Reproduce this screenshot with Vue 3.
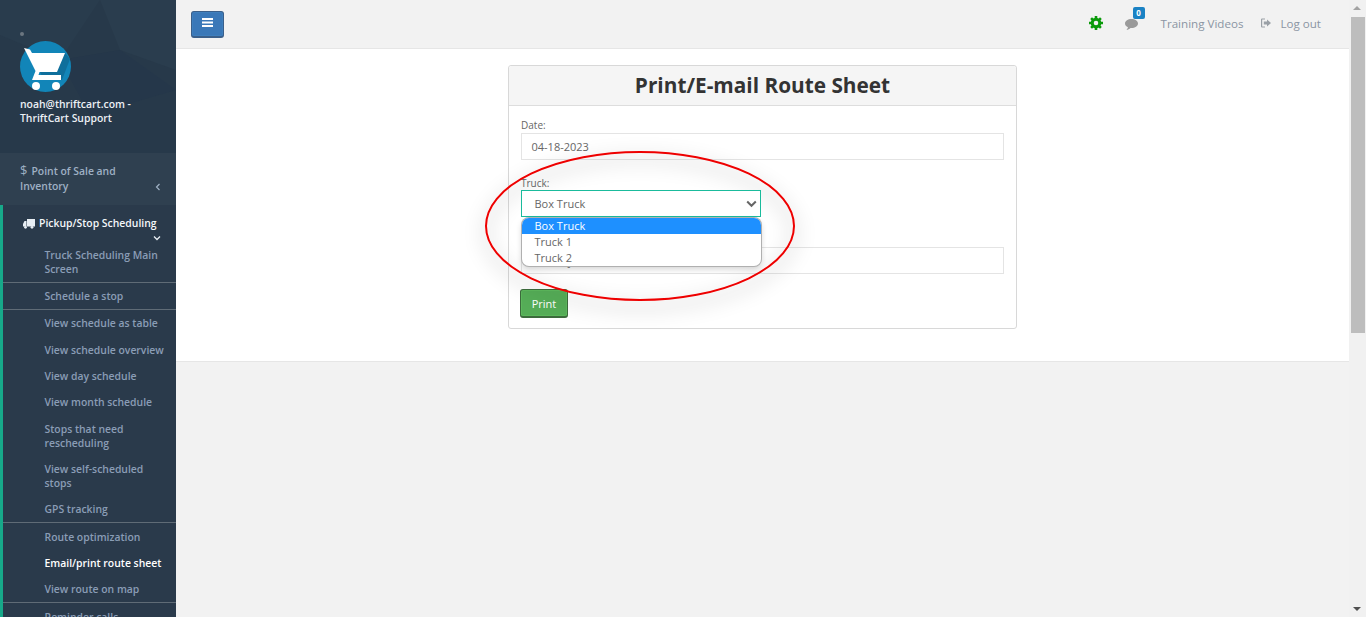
<script setup>
const items = [
  { t: 'Truck Scheduling Main Screen', line: true },
  { t: 'Schedule a stop', line: true },
  { t: 'View schedule as table' },
  { t: 'View schedule overview' },
  { t: 'View day schedule' },
  { t: 'View month schedule' },
  { t: 'Stops that need rescheduling' },
  { t: 'View self-scheduled stops' },
  { t: 'GPS tracking', line: true },
  { t: 'Route optimization' },
  { t: 'Email/print route sheet', active: true },
  { t: 'View route on map', line: true },
  { t: 'Reminder calls' }
]
</script>

<template>
  <div class="page">
    <aside class="side">
      <div class="profile">
        <svg class="poly" width="176" height="153" viewBox="0 0 176 153">
          <polygon points="0,0 100,0 60,60 0,35" fill="#293c4d" />
          <polygon points="100,0 176,0 176,70 120,50" fill="#2a3d4e" />
          <polygon points="60,60 120,50 176,90 90,115" fill="#25374a" />
          <polygon points="0,125 176,125 176,153 0,153" fill="#27394a" />
        </svg>
        <span class="dot"></span>
        <svg class="avatar" width="51" height="51" viewBox="0 0 51 51">
          <circle cx="25.500" cy="25.500" r="25.500" fill="#1285b8" />
          <path d="M45 12 L50 18 L42 39 H24 L20 31 Z" fill="#0f6f9c" />
          <path d="M4 7 L10 8.500 L12 12 H45 L37 31 H19.500 L18.500 34 H41 V39 H12 L15.500 30 Z" fill="#fff" />
          <circle cx="16" cy="45" r="4" fill="#fff" />
          <circle cx="36" cy="45" r="4" fill="#fff" />
        </svg>
        <p class="who">noah@thriftcart.com - ThriftCart Support</p>
      </div>
      <div class="pos">
        <span class="dollar">$</span>Point of Sale and Inventory
        <svg class="chev-left" width="6" height="8" viewBox="0 0 6 8"><path d="M4.500 1 L1.500 4 L4.500 7" fill="none" stroke="#9fb0c4" stroke-width="1.200" /></svg>
      </div>
      <div class="group">
        <div class="grouphead">
          <svg class="truck" width="12" height="10" viewBox="0 0 12 10">
            <path d="M4 0 H12 V7.500 H4 Z M0 5 L1.500 2 H3.500 V7.500 H0 Z" fill="#e8eef4" />
            <circle cx="2.500" cy="8.300" r="1.400" fill="#e8eef4" />
            <circle cx="9" cy="8.300" r="1.400" fill="#e8eef4" />
          </svg>
          <span>Pickup/Stop Scheduling</span>
        </div>
        <svg class="chev-down" width="8" height="6" viewBox="0 0 8 6"><path d="M1 1.500 L4 4.500 L7 1.500" fill="none" stroke="#e8eef4" stroke-width="1.300" /></svg>
        <ul class="menu">
          <li v-for="i in items" :key="i.t" :class="{ line: i.line, active: i.active }">{{ i.t }}</li>
        </ul>
      </div>
    </aside>

    <div class="main">
      <header class="top">
        <button class="toggle" aria-label="menu">
          <svg width="11" height="9" viewBox="0 0 11 9"><path d="M0 0 H11 V2 H0 Z M0 3.500 H11 V5.500 H0 Z M0 7 H11 V9 H0 Z" fill="#fff" /></svg>
        </button>
        <div class="right">
          <svg class="gear" width="14" height="14" viewBox="0 0 14 14">
            <circle cx="7" cy="7" r="3.800" fill="none" stroke="#0a9a0a" stroke-width="3" />
            <path d="M5.700 0 H8.300 V3 H5.700 Z M5.700 11 H8.300 V14 H5.700 Z M0 5.700 H3 V8.300 H0 Z M11 5.700 H14 V8.300 H11 Z M1.200 3 L3 1.200 L5 3.200 L3.200 5 Z M9 3.200 L11 1.200 L12.800 3 L10.800 5 Z M1.200 11 L3.200 9 L5 10.800 L3 12.800 Z M9 10.800 L10.800 9 L12.800 11 L11 12.800 Z" fill="#0a9a0a" />
          </svg>
          <span class="msg">
            <svg width="13" height="12" viewBox="0 0 13 12"><path d="M6.500 1 C10 1 13 3 13 5.500 C13 8 10 10 6.500 10 L5.500 10 C4.500 11 3 11.700 1.500 12 C2.300 11 2.800 10 3 9.300 C1.200 8.500 0 7.100 0 5.500 C0 3 3 1 6.500 1 Z" fill="#9a9a9a" /></svg>
            <b class="badge">0</b>
          </span>
          <span class="link">Training Videos</span>
          <span class="link out">
            <svg width="10" height="10" viewBox="0 0 10 10"><path d="M4 0.500 H1 Q0 0.500 0 1.500 V8.500 Q0 9.500 1 9.500 H4 V8.500 H1.200 V1.500 H4 Z M6 1.500 L10 5 L6 8.500 V6.500 H2.800 V3.500 H6 Z" fill="#9aa0a6" /></svg>
            Log out
          </span>
        </div>
      </header>

      <section class="content">
        <div class="panel">
          <h1 class="title">Print/E-mail Route Sheet</h1>
          <div class="body">
            <label class="lab">Date:</label>
            <div class="input">04-18-2023</div>
            <label class="lab truck-lab">Truck:</label>
            <div class="input select">
              <span>Box Truck</span>
              <svg width="11" height="8" viewBox="0 0 11 8"><path d="M1.200 1.500 L5.500 5.800 L9.800 1.500" fill="none" stroke="#666" stroke-width="2" /></svg>
              <ul class="drop">
                <li class="sel">Box Truck</li>
                <li>Truck 1</li>
                <li>Truck 2</li>
              </ul>
            </div>
            <div class="input third">Delivery</div>
            <button class="print">Print</button>
          </div>
        </div>
      </section>
      <div class="rest"></div>
    </div>

    <div class="bar">
      <span class="arrow up"></span>
      <span class="thumb"></span>
      <span class="arrow down"></span>
    </div>

    <svg class="ring" width="330" height="170" viewBox="0 0 330 170">
      <defs>
        <filter id="sh" x="-20%" y="-20%" width="140%" height="160%">
          <feDropShadow dx="0" dy="7" stdDeviation="10" flood-color="#000" flood-opacity="0.48" />
        </filter>
      </defs>
      <ellipse cx="155" cy="79" rx="154" ry="74" fill="none" stroke="#ee0000" stroke-width="2" filter="url(#sh)" />
    </svg>
  </div>
</template>

<style>
html, body { margin: 0; height: 100%; overflow: hidden; }
</style>

<style scoped>
.page {
  position: relative;
  display: flex;
  width: 1366px;
  height: 617px;
  overflow: hidden;
  font-family: "Open Sans", "Liberation Sans", sans-serif;
  background: #f2f2f2;
}
.side {
  width: 176px;
  flex: none;
  background: #2a3a4b;
  color: #fff;
  overflow: hidden;
}
.profile {
  position: relative;
  height: 153px;
  box-sizing: border-box;
  padding: 32px 0 0 20px;
  background: #27394a;
}
.poly { position: absolute; left: 0; top: 0; }
.dot {
  position: relative;
  display: block;
  width: 4px;
  height: 4px;
  border-radius: 50%;
  background: #6b7680;
  margin-bottom: 5px;
}
.avatar { position: relative; display: block; }
.who {
  position: relative;
  margin: 5px 0 0;
  width: 130px;
  font-size: 10.400px;
  font-weight: 600;
  line-height: 14px;
  color: #ecf0f5;
}
.pos {
  position: relative;
  height: 52px;
  box-sizing: border-box;
  padding: 10px 40px 0 20px;
  background: #2f4050;
  font-size: 10.400px;
  font-weight: 600;
  line-height: 15px;
  color: #9fb0c4;
}
.dollar { font-size: 13px; margin-right: 4px; font-weight: 400; }
.chev-left { position: absolute; left: 155px; top: 30px; }
.group {
  border-left: 3px solid #17a98a;
  min-height: 420px;
  position: relative;
}
.grouphead {
  display: flex;
  align-items: center;
  gap: 4px;
  padding: 11px 0 0 20px;
  font-size: 10.400px;
  font-weight: 600;
  line-height: 15px;
  color: #f4f7fa;
  white-space: nowrap;
}
.chev-down { display: block; margin: 4px 0 0 150px; }
.menu {
  list-style: none;
  margin: 3.400px 0 0;
  padding: 0;
}
.menu li {
  padding: 3.200px 6px 9.150px 41.500px;
  font-size: 10.400px;
  font-weight: 600;
  line-height: 14px;
  color: #8a9db6;
}
.menu li.line { border-bottom: 1px solid #5f6b76; padding-bottom: 6.150px; margin-bottom: 3px; }
.menu li.active { color: #fff; }
.main {
  flex: 1;
  min-width: 0;
  display: flex;
  flex-direction: column;
}
.top {
  height: 48px;
  flex: none;
  box-sizing: content-box;
  display: flex;
  align-items: center;
  justify-content: space-between;
  padding: 0 28px 0 15px;
  background: #f2f2f2;
  border-bottom: 1px solid #e6e6e6;
}
.toggle {
  width: 33px;
  height: 27px;
  padding: 0 0 2px;
  border: 1px solid #3a5f8a;
  border-bottom-width: 2px;
  border-radius: 3px;
  background: #3a78b8;
  box-shadow: inset 0 0 0 1px #3f7fbd;
  display: flex;
  align-items: center;
  justify-content: center;
}
.right {
  display: flex;
  align-items: center;
  font-size: 11.600px;
  color: #8b95a3;
  margin-top: -2px;
}
.gear { margin-right: 22px; }
.msg { position: relative; display: flex; margin-right: 23px; top: 1px; }
.badge {
  position: absolute;
  left: 8px;
  top: -11px;
  width: 12px;
  height: 12px;
  border-radius: 2px;
  background: #1a82c4;
  color: #fff;
  font-size: 8px;
  font-weight: 700;
  line-height: 12px;
  text-align: center;
}
.link { white-space: nowrap; }
.out { margin-left: 18px; display: flex; align-items: center; gap: 9px; }
.content {
  flex: none;
  height: 313px;
  box-sizing: border-box;
  padding-top: 16px;
  background: #fff;
  border-bottom: 1px solid #e6e6e6;
  display: flex;
  justify-content: center;
}
.panel {
  width: 509px;
  height: 264px;
  box-sizing: border-box;
  border: 1px solid #d8d8d8;
  border-radius: 3px;
}
.title {
  margin: 0;
  height: 40px;
  box-sizing: border-box;
  background: #f5f5f5;
  border-bottom: 1px solid #ddd;
  border-radius: 3px 3px 0 0;
  font-size: 20.800px;
  font-weight: 700;
  line-height: 39px;
  text-align: center;
  color: #333;
}
.body { padding: 12px 12px 0; position: relative; }
.lab {
  display: block;
  font-size: 10px;
  line-height: 14px;
  color: #666;
}
.input {
  position: relative;
  height: 27px;
  box-sizing: border-box;
  margin-top: 1px;
  padding: 0 9.500px;
  border: 1px solid #e4e4e4;
  font-size: 11px;
  line-height: 26px;
  color: #666;
  background: #fff;
}
.truck-lab { margin-top: 16px; }
.select {
  width: 240px;
  margin-top: 0;
  padding-left: 12.500px;
  border-color: #1abb9c;
  display: flex;
  align-items: center;
  justify-content: space-between;
  padding-right: 3px;
  z-index: 2;
}
.drop {
  position: absolute;
  left: 0;
  top: 27px;
  width: 239px;
  box-sizing: border-box;
  margin: 0;
  padding: 0;
  list-style: none;
  border-radius: 7px;
  background: #fff;
  overflow: hidden;
  box-shadow: 0 0 0 1px #b0b0b0, 0 3px 6px rgba(0, 0, 0, 0.18);
}
.drop li {
  height: 16px;
  padding-left: 12.500px;
  font-size: 11px;
  line-height: 16px;
  color: #666;
}
.drop li.sel { background: #1e90ff; color: #fff; }
.third { margin-top: 30px; }
.print {
  display: block;
  width: 48px;
  height: 29px;
  margin: 15px 0 0 -1px;
  padding: 0;
  border: 1px solid #3c6b3c;
  border-bottom-width: 2px;
  border-radius: 3px;
  background: #55ad57;
  box-shadow: inset 0 0 0 1px #5cb85c;
  color: #fff;
  font: 11px "Open Sans", sans-serif;
}
.rest { flex: 1; background: #f2f2f2; }
.bar {
  position: relative;
  width: 17px;
  flex: none;
  background: #f1f1f1;
}
.thumb {
  position: absolute;
  left: 2px;
  top: 17px;
  width: 14px;
  height: 316px;
  background: #bdbdbd;
}
.arrow { position: absolute; left: 4px; width: 0; height: 0; border-left: 4px solid transparent; border-right: 4px solid transparent; }
.up { top: 6px; border-bottom: 4px solid #a3a3a3; }
.down { bottom: 6px; border-top: 4px solid #505050; }
.ring {
  position: absolute;
  left: 485px;
  top: 147px;
  overflow: visible;
  pointer-events: none;
}
</style>
